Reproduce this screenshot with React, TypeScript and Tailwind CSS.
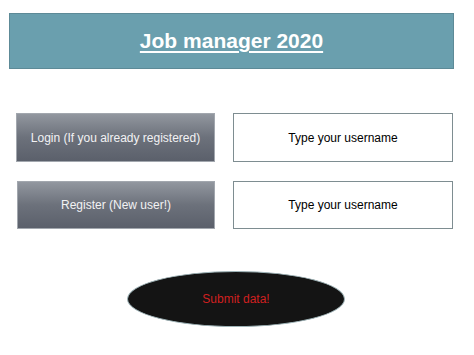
export default function App() {
  return (
    <div className="w-[474px] h-[355px] bg-white pt-[13px] font-['Liberation_Sans',Arial,sans-serif]">
      <header className="mx-[9px] w-[445px] h-[56px] bg-[#6a9fae] border border-[#5d8a97] flex items-center justify-center">
        <h1 className="text-white text-[21px] font-bold underline underline-offset-[3px] decoration-2">
          Job manager 2020
        </h1>
      </header>

      <div className="mt-[44px] flex flex-col gap-[19px]">
        <div className="flex gap-[18px] pl-[16px]">
          <button className="w-[199px] h-[49px] bg-gradient-to-b from-[#92979f] via-[#6c717b] to-[#5b606b] border border-[#a2a7ae] text-[#f2f2f4] text-[12px] flex items-center justify-center">
            Login (If you already registered)
          </button>
          <div className="w-[220px] h-[49px] border border-[#7e8d91] bg-white text-black text-[12px] flex items-center justify-center">
            Type your username
          </div>
        </div>
        <div className="flex gap-[18px] pl-[17px]">
          <button className="w-[198px] h-[48px] bg-gradient-to-b from-[#92979f] via-[#6c717b] to-[#5b606b] border border-[#a2a7ae] text-[#f2f2f4] text-[12px] flex items-center justify-center">
            Register (New user!)
          </button>
          <div className="w-[220px] h-[48px] border border-[#7e8d91] bg-white text-black text-[12px] flex items-center justify-center">
            Type your username
          </div>
        </div>
      </div>

      <div className="mt-[42px] pl-[127px]">
        <button className="w-[218px] h-[56px] rounded-[50%] bg-[#141414] border border-[#9fb4b8] text-[#d02020] text-[12px] flex items-center justify-center">
          Submit data!
        </button>
      </div>
    </div>
  );
}
